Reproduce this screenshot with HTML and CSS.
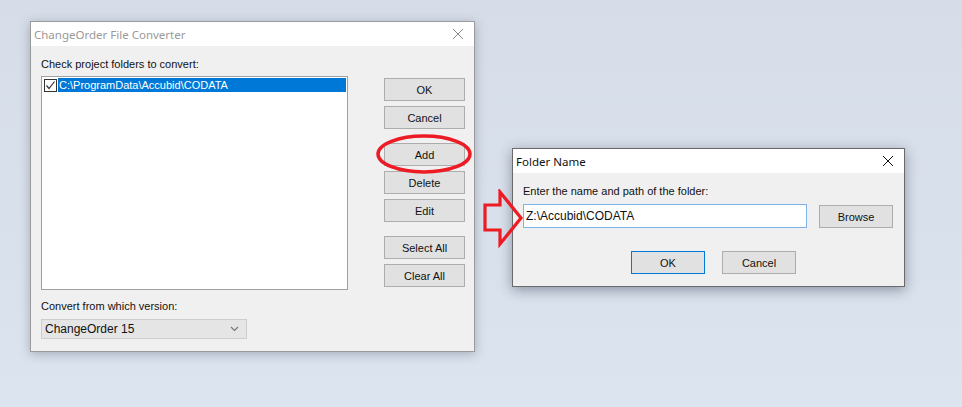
FILE: index.html
```html
<!DOCTYPE html>
<html>
<head>
<meta charset="utf-8">
<link rel="stylesheet" href="styles.css">
</head>
<body>
<div class="desktop">
  <div class="window win-convert">
    <div class="titlebar">
      <span class="title inactive">ChangeOrder File Converter</span>
      <svg class="close" width="12" height="12" viewBox="0 0 12 12"><path d="M1 1L11 11M11 1L1 11" stroke="#8a8a8a" stroke-width="1"/></svg>
    </div>
    <div class="body conv-body">
      <div class="left-col">
        <div class="label">Check project folders to convert:</div>
        <div class="listbox">
          <div class="list-row">
            <span class="checkbox"><svg width="11" height="11" viewBox="0 0 11 11"><path d="M1.5 5.5L4 8.5L9.5 1.5" fill="none" stroke="#333" stroke-width="1.2"/></svg></span>
            <span class="row-text">C:\ProgramData\Accubid\CODATA</span>
          </div>
        </div>
        <div class="label label-version">Convert from which version:</div>
        <div class="combo">
          <span>ChangeOrder 15</span>
          <svg width="9" height="6" viewBox="0 0 9 6"><path d="M1 1L4.5 4.5L8 1" fill="none" stroke="#777" stroke-width="1.2"/></svg>
        </div>
      </div>
      <div class="btn-col">
        <div class="btn-group">
          <div class="btn">OK</div>
          <div class="btn">Cancel</div>
        </div>
        <div class="btn-group">
          <div class="btn">Add</div>
          <div class="btn">Delete</div>
          <div class="btn">Edit</div>
        </div>
        <div class="btn-group">
          <div class="btn">Select All</div>
          <div class="btn">Clear All</div>
        </div>
      </div>
    </div>
  </div>

  <div class="window win-folder">
    <div class="titlebar">
      <span class="title">Folder Name</span>
      <svg class="close" width="12" height="12" viewBox="0 0 12 12"><path d="M1 1L11 11M11 1L1 11" stroke="#111" stroke-width="1"/></svg>
    </div>
    <div class="body folder-body">
      <div class="label">Enter the name and path of the folder:</div>
      <div class="input-row">
        <div class="textbox">Z:\Accubid\CODATA</div>
        <div class="btn btn-browse">Browse</div>
      </div>
      <div class="action-row">
        <div class="btn btn-default">OK</div>
        <div class="btn">Cancel</div>
      </div>
    </div>
  </div>

  <svg class="annot annot-ellipse" width="104" height="46" viewBox="0 0 104 46">
    <ellipse cx="52" cy="23" rx="46" ry="18" fill="none" stroke="#ed1c24" stroke-width="3.5"/>
  </svg>
  <svg class="annot annot-arrow" width="44" height="60" viewBox="0 0 44 60">
    <path d="M3 16H18V3L39 29L18 55V41H3Z" fill="none" stroke="#ed1c24" stroke-width="3.2" stroke-linejoin="miter"/>
  </svg>
</div>
</body>
</html>
```

FILE: styles.css
```css
html, body {
  margin: 0;
  padding: 0;
}
body {
  width: 962px;
  height: 407px;
  overflow: hidden;
  background: linear-gradient(180deg, #d6dde8 0%, #d9e1ec 60%, #dce4ef 100%);
  font-family: "Liberation Sans", Arial, sans-serif;
  font-size: 11px;
  color: #111;
}
.desktop {
  position: relative;
  width: 962px;
  height: 407px;
}
.window {
  position: absolute;
  box-sizing: border-box;
  background: #f0f0f0;
  display: flex;
  flex-direction: column;
}
.win-convert {
  left: 30px;
  top: 21px;
  width: 445px;
  height: 331px;
  border: 1px solid #9a9a9a;
  box-shadow: 0 2px 10px rgba(60, 70, 90, 0.35);
}
.win-folder {
  left: 512px;
  top: 148px;
  width: 393px;
  height: 139px;
  border: 1px solid #6a6a6a;
  box-shadow: 0 3px 12px rgba(40, 50, 70, 0.45);
}
.titlebar {
  height: 24px;
  flex: none;
  background: #fff;
  display: flex;
  align-items: center;
  justify-content: space-between;
  padding: 0 10px 0 3px;
}
.title {
  font-family: "Noto Sans", "Open Sans", sans-serif;
  font-size: 11.5px;
  color: #111;
}
.title.inactive {
  color: #999;
}
.close {
  display: block;
}
.body {
  flex: 1;
}
.conv-body {
  display: flex;
  padding: 12px 0 0 10px;
}
.left-col {
  width: 307px;
  display: flex;
  flex-direction: column;
}
.label {
  height: 13px;
  line-height: 13px;
  white-space: nowrap;
}
.listbox {
  margin-top: 5px;
  height: 211px;
  background: #fff;
  border: 1px solid #a0a0a0;
  padding: 1px 1px 0 2px;
}
.list-row {
  display: flex;
  align-items: center;
  height: 14px;
}
.checkbox {
  box-sizing: border-box;
  width: 13px;
  height: 13px;
  border: 1px solid #333;
  background: #fff;
  display: flex;
  align-items: center;
  justify-content: center;
  margin-right: 1px;
}
.row-text {
  flex: 1;
  background: #0078d7;
  color: #fff;
  height: 14px;
  line-height: 14px;
  padding-left: 1px;
}
.label-version {
  margin-top: 10px;
}
.combo {
  margin-top: 6px;
  box-sizing: border-box;
  width: 206px;
  height: 20px;
  background: #e5e5e5;
  border: 1px solid #cdcdcd;
  display: flex;
  align-items: center;
  justify-content: space-between;
  padding: 0 7px 0 3px;
  font-size: 12px;
}
.btn-col {
  margin-left: 36px;
  padding-top: 20px;
  display: flex;
  flex-direction: column;
  gap: 14px;
}
.btn-group {
  display: flex;
  flex-direction: column;
  gap: 5px;
}
.btn {
  box-sizing: border-box;
  width: 81px;
  height: 23px;
  background: #e1e1e1;
  border: 1px solid #adadad;
  display: flex;
  align-items: center;
  justify-content: center;
}
.folder-body {
  padding: 12px 0 0 10px;
  display: flex;
  flex-direction: column;
}
.input-row {
  margin-top: 6px;
  display: flex;
  align-items: flex-start;
  gap: 12px;
}
.textbox {
  box-sizing: border-box;
  width: 284px;
  height: 24px;
  background: #fff;
  border: 1px solid #7eb4ea;
  display: flex;
  align-items: center;
  padding-left: 2px;
  font-size: 12px;
}
.btn-browse {
  width: 74px;
  margin-top: 1px;
}
.action-row {
  margin-top: 23px;
  display: flex;
  gap: 17px;
  padding-left: 108px;
}
.action-row .btn {
  width: 74px;
  height: 23px;
}
.btn-default {
  border: 1px solid #0078d7;
}
.annot {
  position: absolute;
  display: block;
}
.annot-ellipse {
  left: 372px;
  top: 131px;
}
.annot-arrow {
  left: 482px;
  top: 189px;
}
```
